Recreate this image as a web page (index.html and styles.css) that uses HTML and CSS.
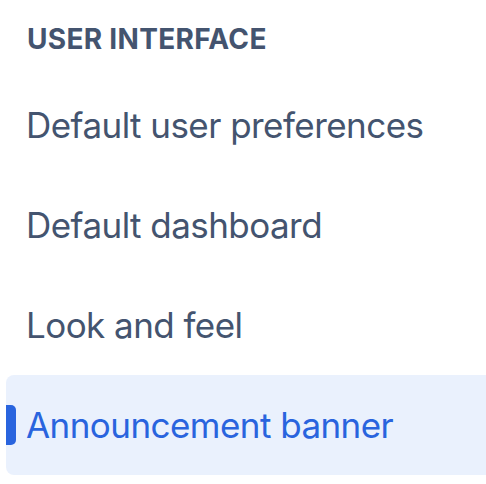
FILE: index.html
```html
<!DOCTYPE html>
<html lang="en">
<head>
<meta charset="utf-8">
<title>User interface</title>
<link rel="stylesheet" href="styles.css">
</head>
<body>
<nav class="side-nav">
  <h2 class="section-heading">User interface</h2>
  <ul class="nav-list">
    <li><a class="nav-item" href="#">Default user preferences</a></li>
    <li><a class="nav-item" href="#">Default dashboard</a></li>
    <li><a class="nav-item" href="#">Look and feel</a></li>
    <li><a class="nav-item is-selected" href="#">Announcement banner</a></li>
  </ul>
</nav>
</body>
</html>
```
FILE: styles.css
```css
html, body {
  margin: 0;
  padding: 0;
  background: #ffffff;
}
body {
  font-family: Inter, "Noto Sans", "Liberation Sans", sans-serif;
  color: #44546f;
}
.side-nav {
  padding: 19px 0 0 6px;
}
.section-heading {
  margin: 0 0 16px 0;
  padding-left: 21px;
  height: 40px;
  line-height: 40px;
  font-size: 28px;
  font-weight: 700;
  text-transform: uppercase;
  letter-spacing: 0.3px;
  color: #44546f;
}
.nav-list {
  list-style: none;
  margin: 0;
  padding: 0;
}
.nav-item {
  position: relative;
  display: block;
  height: 100px;
  line-height: 100px;
  padding-left: 20px;
  font-size: 35px;
  font-weight: 400;
  letter-spacing: -0.55px;
  color: #44546f;
  text-decoration: none;
  border-radius: 8px 0 0 8px;
}
.nav-item.is-selected {
  background: #eaf1fd;
  color: #2964de;
}
.nav-item.is-selected::before {
  content: "";
  position: absolute;
  left: 0;
  top: 30px;
  width: 10px;
  height: 40px;
  background: #2964de;
  border-radius: 0 5px 5px 0;
}
```
